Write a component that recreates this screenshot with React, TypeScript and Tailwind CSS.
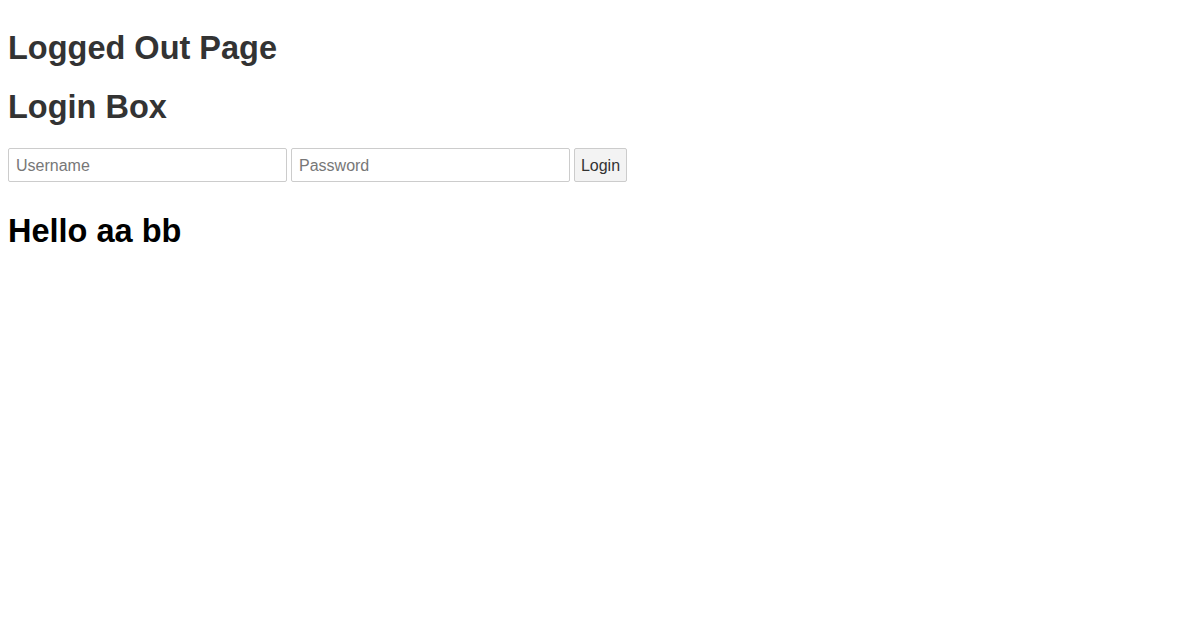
export default function App() {
  return (
    <div className="min-h-screen bg-white px-2 pt-[31px] font-['Liberation_Sans',Arial,sans-serif]">
      <h2 className="text-[32.5px] font-bold leading-[35px] text-[#333]">Logged Out Page</h2>
      <h2 className="mt-[24px] text-[32.5px] font-bold leading-[35px] text-[#333]">Login Box</h2>
      <form className="mt-[23px] flex gap-1" onSubmit={(e) => e.preventDefault()}>
        <input
          type="text"
          placeholder="Username"
          className="h-[34px] w-[279px] rounded-[2px] border border-[#ccc] px-[7px] pt-[1px] text-[16px] text-[#333] placeholder:text-[#777] outline-none"
        />
        <input
          type="password"
          placeholder="Password"
          className="h-[34px] w-[279px] rounded-[2px] border border-[#ccc] px-[7px] pt-[1px] text-[16px] text-[#333] placeholder:text-[#777] outline-none"
        />
        <button
          type="submit"
          className="h-[34px] w-[53px] rounded-[2px] border border-[#ccc] bg-[#f3f3f3] pt-[1px] text-[16px] text-[#333]"
        >
          Login
        </button>
      </form>
      <h2 className="mt-[32px] text-[32.5px] font-bold leading-[35px] text-black">Hello aa bb</h2>
    </div>
  );
}
